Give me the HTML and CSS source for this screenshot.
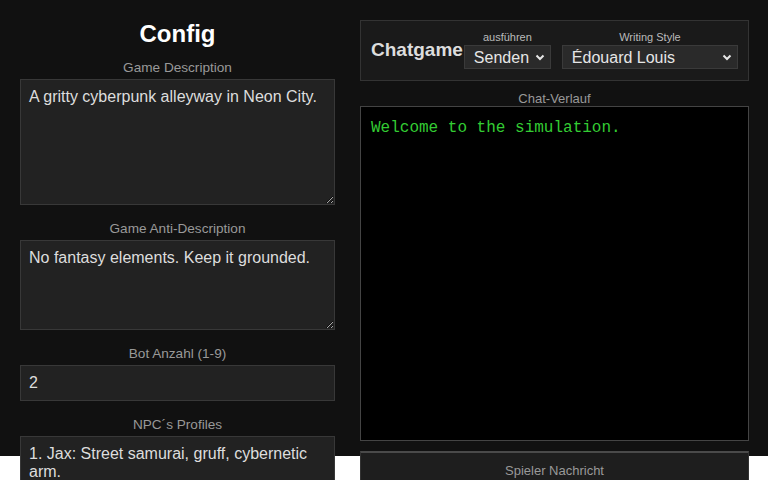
FILE: index.html
```html
<!DOCTYPE html>
<html>
<head>
    <title>Chatgame</title>
    <link rel="stylesheet" href="styles.css">
</head>
<body>
    <div class="app">
        <div class="config">
            <h2>Config</h2>

            <div class="field">
                <label for="gameDesc">Game Description</label>
                <textarea id="gameDesc" class="desc">A gritty cyberpunk alleyway in Neon City.</textarea>
            </div>

            <div class="field">
                <label for="antiDesc">Game Anti-Description</label>
                <textarea id="antiDesc" class="anti">No fantasy elements. Keep it grounded.</textarea>
            </div>

            <div class="field">
                <label for="botCount">Bot Anzahl (1-9)</label>
                <input type="text" id="botCount" value="2">
            </div>

            <div class="field">
                <label for="npcProfiles">NPC´s Profiles</label>
                <textarea id="npcProfiles" class="npc">1. Jax: Street samurai, gruff, cybernetic arm.</textarea>
            </div>
        </div>

        <div class="chat">
            <div class="chat-header">
                <h3>Chatgame</h3>
                <div class="control">
                    <span class="control-label">ausführen</span>
                    <span class="select-wrap">
                        <select id="action" class="action-select">
                            <option>Senden</option>
                        </select>
                        <svg class="chevron" width="10" height="7" viewBox="0 0 10 7"><path d="M1.5 1.5 L5 5 L8.5 1.5" fill="none" stroke="#e6e6e6" stroke-width="2"/></svg>
                    </span>
                </div>
                <div class="control wide">
                    <span class="control-label">Writing Style</span>
                    <span class="select-wrap">
                        <select id="style" class="style-select">
                            <option>Édouard Louis</option>
                        </select>
                        <svg class="chevron" width="10" height="7" viewBox="0 0 10 7"><path d="M1.5 1.5 L5 5 L8.5 1.5" fill="none" stroke="#e6e6e6" stroke-width="2"/></svg>
                    </span>
                </div>
            </div>

            <label class="chat-label">Chat-Verlauf</label>
            <div class="chat-log" id="chatLog">Welcome to the simulation.</div>

            <div class="message-box">
                <label for="playerMessage">Spieler Nachricht</label>
            </div>
        </div>
    </div>
</body>
</html>
```

FILE: styles.css
```css
html {
    background-color: #fff;
}

body {
    margin: 0;
    padding: 0;
    font-family: "Liberation Sans", Arial, sans-serif;
}

/* dark panel is only 95vh tall, the fields run on below it */
.app {
    box-sizing: border-box;
    min-height: 95vh;
    padding: 20px 19px 20px 20px;
    background: linear-gradient(to bottom, #111 95vh, transparent 95vh);
    display: grid;
    grid-template-columns: 315px 1fr;
    column-gap: 25px;
    align-items: start;
}

/* left column */

.config h2 {
    margin: 0;
    line-height: 28px;
    font-size: 24px;
    text-align: center;
    color: #fff;
}

.field {
    margin-top: 16px;
}

.config h2 + .field {
    margin-top: 12px;
}

.field label {
    display: block;
    margin-bottom: 4px;
    font-size: 13.6px;
    line-height: 15px;
    text-align: center;
    color: #999;
}

.field textarea,
.field input[type="text"] {
    display: block;
    box-sizing: border-box;
    width: 100%;
    margin: 0;
    padding: 8px;
    border: 1px solid #383838;
    background-color: #222;
    color: #ddd;
    font-family: "Liberation Sans", Arial, sans-serif;
    font-size: 16px;
    line-height: 18px;
    resize: vertical;
}

.field textarea:focus,
.field input[type="text"]:focus {
    outline: none;
}

.desc {
    height: 126px;
}

.anti {
    height: 90px;
}

.field input[type="text"] {
    height: 36px;
}

.npc {
    height: 120px;
}

/* right column */

.chat-header {
    display: flex;
    align-items: center;
    padding: 10px 10px 11px;
    border: 1px solid #333;
    background-color: #1a1a1a;
}

.chat-header h3 {
    margin: 0;
    font-size: 19px;
    color: #ddd;
}

.control {
    display: flex;
    flex-direction: column;
    align-items: center;
    margin-left: 1px;
}

.control.wide {
    flex: 1;
    margin-left: 11px;
    align-items: stretch;
}

.control-label {
    margin-bottom: 2px;
    font-size: 11px;
    line-height: 12px;
    text-align: center;
    color: #bbb;
}

.select-wrap {
    position: relative;
    display: block;
}

.select-wrap select {
    appearance: none;
    -webkit-appearance: none;
    display: block;
    box-sizing: border-box;
    height: 24px;
    margin: 0;
    padding: 0 21px 0 9px;
    border: 1px solid #3a3a3a;
    border-radius: 0;
    background-color: #2a2a2a;
    color: #e6e6e6;
    font-family: "Liberation Sans", Arial, sans-serif;
    font-size: 16px;
}

.action-select {
    width: 87px;
}

.style-select {
    width: 100%;
}

.chevron {
    position: absolute;
    right: 6px;
    top: 9px;
    pointer-events: none;
}

.chat-label {
    display: block;
    margin-top: 10px;
    font-size: 13px;
    line-height: 15px;
    text-align: center;
    color: #999;
}

.chat-log {
    box-sizing: border-box;
    height: 335px;
    padding: 11px 10px 10px;
    border: 1px solid #444;
    background-color: #000;
    color: #33cc33;
    font-family: "Liberation Mono", "Courier New", monospace;
    font-size: 16px;
    line-height: 20px;
}

.message-box {
    margin-top: 10px;
    padding: 10px 10px 20px;
    border: 1px solid #333;
    border-top: 2px solid #4a4a4a;
    background-color: #1e1e1e;
}

.message-box label {
    display: block;
    font-size: 13px;
    line-height: 15px;
    text-align: center;
    color: #999;
}
```
